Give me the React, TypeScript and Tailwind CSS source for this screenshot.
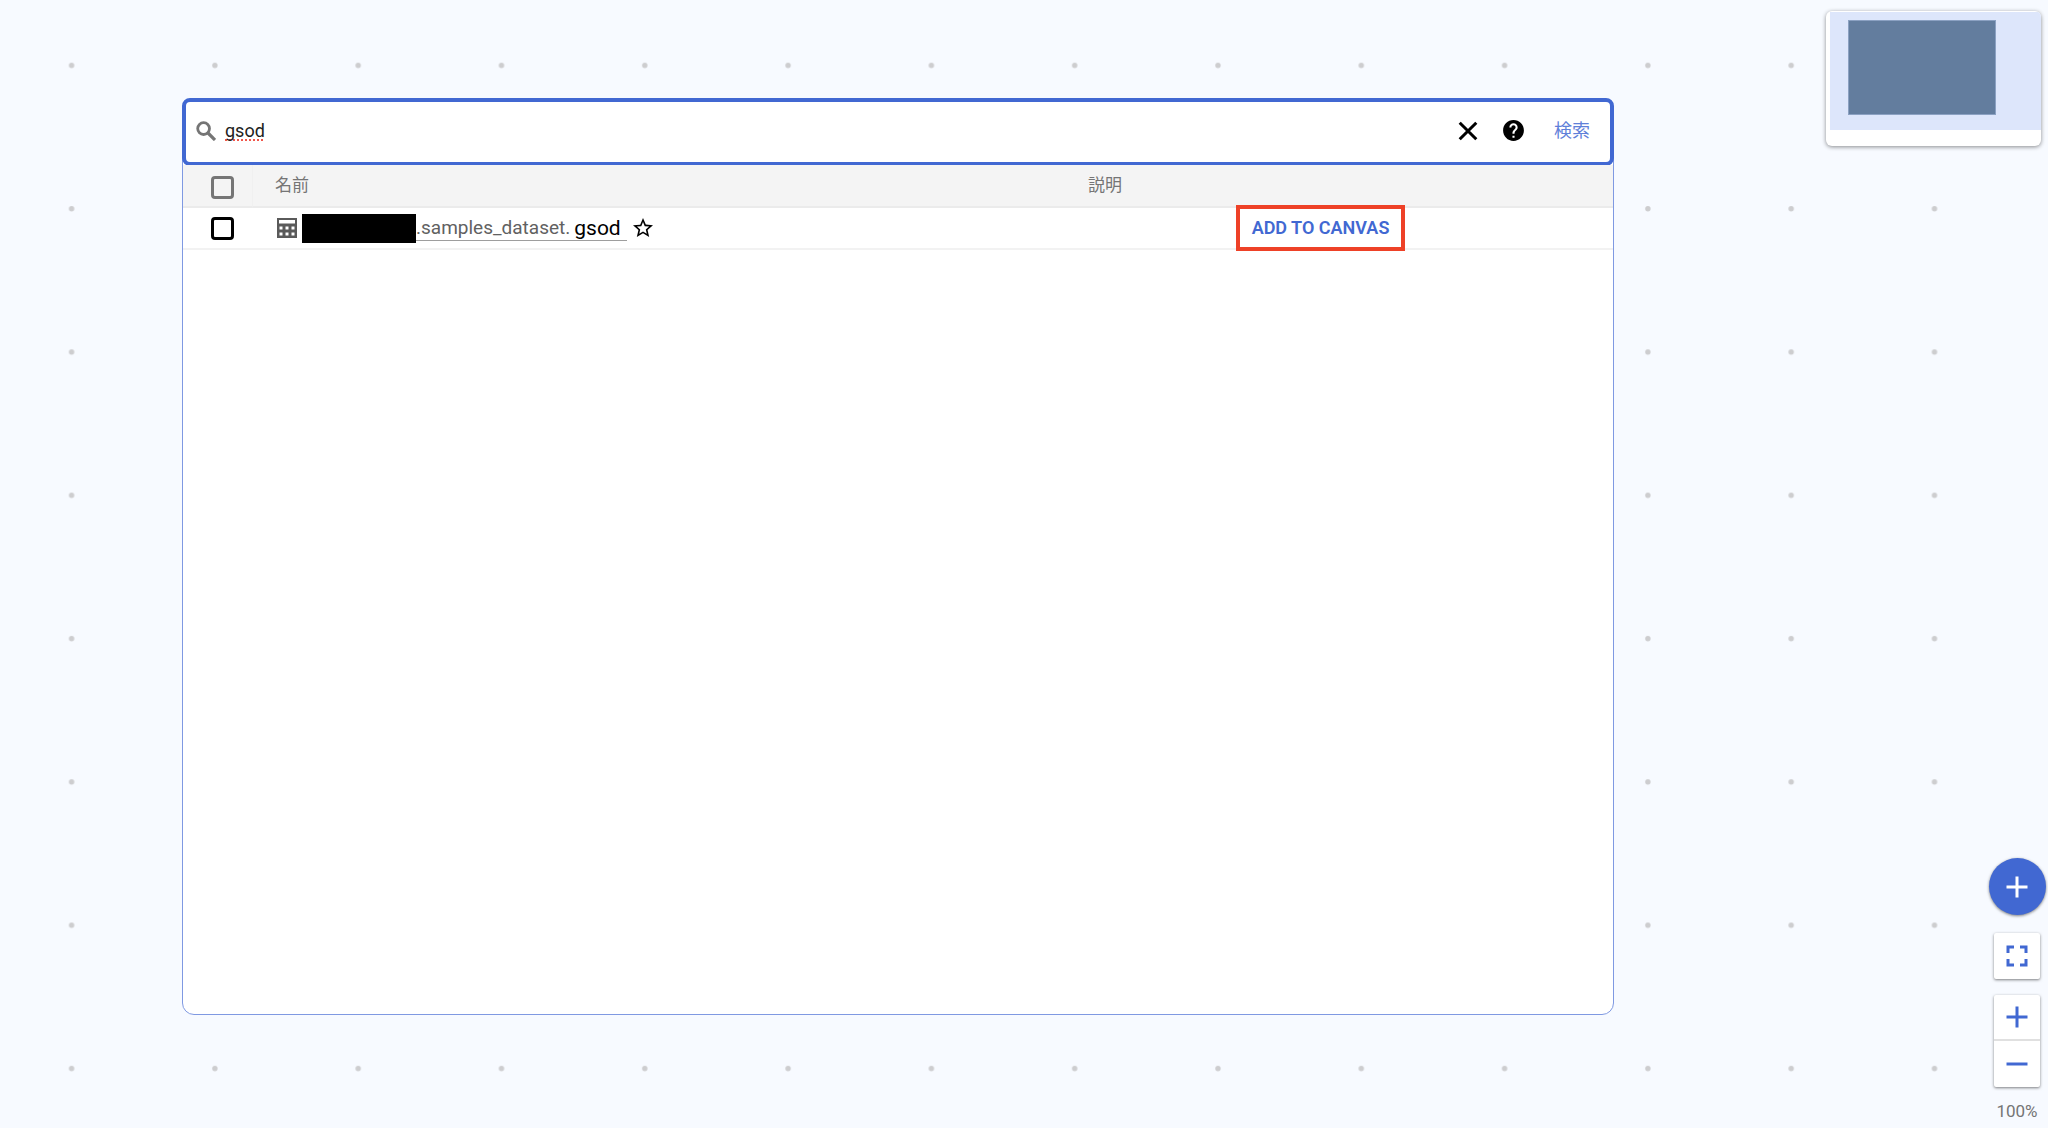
import { useState } from "react";

import {
    MdAdd,
    MdFullscreen,
    MdHelp,
    MdRemove,
    MdStarBorder,
} from "react-icons/md";

const CanvasDots = () => (
    <svg className="absolute inset-0 w-full h-full" aria-hidden="true">
        <defs>
            <pattern
                id="dots"
                width="143.3"
                height="143.3"
                patternUnits="userSpaceOnUse"
            >
                <circle cx="71.6" cy="65.4" r="2.7" fill="#cdcdcf" />
            </pattern>
        </defs>
        <rect width="100%" height="100%" fill="url(#dots)" />
    </svg>
);

const SearchIcon = () => (
    <svg
        width="20"
        height="20"
        viewBox="0 0 20 20"
        fill="none"
        stroke="#757575"
        strokeWidth="2.8"
        aria-hidden="true"
    >
        <circle cx="7.6" cy="7.6" r="5.9" />
        <path d="M12 12l7 7" strokeWidth="3.2" />
    </svg>
);

const CloseIcon = () => (
    <svg
        width="20"
        height="20"
        viewBox="0 0 20 20"
        stroke="#000"
        strokeWidth="3"
        aria-hidden="true"
    >
        <path d="M1.7 1.7l16.6 16.6M18.3 1.7L1.7 18.3" />
    </svg>
);

const TableIcon = () => (
    <svg width="20" height="20" viewBox="0 0 20 20" aria-hidden="true">
        <path
            fill="#5a5a5a"
            fillRule="evenodd"
            d="M0 0h20v20H0zM2 2v3.5h16V2zM2.5 8.5v3h3v-3zM8.5 8.5v3h3v-3zM14.5 8.5v3h3v-3zM2.5 14.5v3h3v-3zM8.5 14.5v3h3v-3zM14.5 14.5v3h3v-3z"
        />
    </svg>
);

const Checkbox = ({ label, tone }: { label: string; tone: string }) => (
    <input
        type="checkbox"
        aria-label={label}
        className={`block appearance-none w-[23px] h-[23px] ml-[28px] border-3 rounded-sm bg-transparent checked:bg-[#4168d2] ${tone}`}
    />
);

const SearchBar = () => {
    const [query, setQuery] = useState("gsod");

    return (
        <form
            onSubmit={(e) => e.preventDefault()}
            className="-m-px h-[68px] shrink-0 flex items-center pl-[10px] pr-5 pb-[3px] bg-white rounded-lg border-4 border-[#4168d2]"
        >
            <SearchIcon />
            <input
                type="text"
                aria-label="検索キーワード"
                spellCheck={false}
                value={query}
                onChange={(e) => setQuery(e.target.value)}
                className="flex-1 min-w-0 ml-[9px] text-lg text-[#212121] outline-none underline decoration-dotted decoration-2 decoration-[#f0564a] underline-offset-3 [text-decoration-skip-ink:none]"
            />
            <button type="button" aria-label="クリア" className="mr-[23px]">
                <CloseIcon />
            </button>
            <button type="button" aria-label="ヘルプ" className="mr-7">
                <MdHelp className="w-[25px] h-[25px] text-black" />
            </button>
            <button type="submit" className="text-lg text-[#5f80d9]">
                検索
            </button>
        </form>
    );
};

const ResultsTable = () => (
    <table className="w-full table-fixed border-separate border-spacing-0">
        <colgroup>
            <col className="w-[70px]" />
            <col />
            <col className="w-[151px]" />
            <col className="w-[398px]" />
        </colgroup>
        <thead>
            <tr className="h-[43px] bg-[#f4f4f4] text-[17px] text-[#757575] text-left *:border-b-2 *:border-b-[#ebebeb]">
                <th className="p-0 pt-1 border-r border-r-[#f0f0f0]">
                    <Checkbox label="すべて選択" tone="border-[#757575]" />
                </th>
                <th className="p-0 pt-px pl-[22px] font-normal">名前</th>
                <th className="p-0 pt-px pl-6 font-normal">説明</th>
                <th className="p-0" aria-label="操作" />
            </tr>
        </thead>
        <tbody>
            <tr className="h-[42px] *:border-b-2 *:border-[#f2f2f2]">
                <td className="p-0">
                    <Checkbox label="gsod を選択" tone="border-black" />
                </td>
                <td className="p-0 pl-6">
                    <div className="flex items-center">
                        <TableIcon />
                        <span className="w-[114px] h-[29px] ml-[5px] bg-black" />
                        <a href="#gsod" className="flex items-end leading-6">
                            <span className="text-[19px] leading-6 text-[#616161] border-b border-[#9e9e9e]">
                                .samples_dataset.
                            </span>
                            <span className="pl-1 pr-[6px] text-[21px] leading-6 text-black border-b border-[#9e9e9e]">
                                gsod
                            </span>
                        </a>
                        <button
                            type="button"
                            aria-label="スターを付ける"
                            className="ml-1"
                        >
                            <MdStarBorder className="w-6 h-6 text-black" />
                        </button>
                    </div>
                </td>
                <td className="p-0" />
                <td className="p-0 pl-[21px]">
                    <button
                        type="button"
                        className="relative block -my-1 w-[169px] h-[46px] border-4 border-[#ee4127] text-lg font-semibold text-[#4168d2] whitespace-nowrap"
                    >
                        ADD TO CANVAS
                    </button>
                </td>
            </tr>
        </tbody>
    </table>
);

const Minimap = () => (
    <div className="w-[215px] h-[135px] mr-[7px] pl-1 pt-px bg-white rounded-md overflow-hidden shadow-[0_1px_4px_rgba(0,0,0,0.45)]">
        <div className="h-[118px] pl-[18px] pt-2 bg-[#dde6fb]">
            <div className="w-[148px] h-[95px] bg-[#637d9e] border border-[#8ba1c2]" />
        </div>
    </div>
);

const CanvasControls = () => (
    <div className="flex flex-col items-center w-[58px] mr-[2px] text-[#4168d2]">
        <button
            type="button"
            aria-label="追加"
            className="grid place-items-center w-[57px] h-[57px] rounded-full bg-[#4168d2] text-white shadow-[0_1px_3px_rgba(0,0,0,0.5)]"
        >
            <MdAdd className="w-9 h-9" />
        </button>
        <button
            type="button"
            aria-label="全画面表示"
            className="grid place-items-center w-[46px] h-[46px] mt-[18px] rounded-xs bg-white shadow-[0_1px_3px_rgba(0,0,0,0.5)]"
        >
            <MdFullscreen className="w-9 h-9" />
        </button>
        <div className="mt-4 w-[46px] rounded-xs bg-white divide-y-2 divide-[#e0e0e0] shadow-[0_1px_3px_rgba(0,0,0,0.5)]">
            <button
                type="button"
                aria-label="拡大"
                className="grid place-items-center w-full h-[46px]"
            >
                <MdAdd className="w-9 h-9" />
            </button>
            <button
                type="button"
                aria-label="縮小"
                className="grid place-items-center w-full h-[46px]"
            >
                <MdRemove className="w-9 h-9" />
            </button>
        </div>
        <p className="mt-3 mb-[5px] text-[17px] leading-6 text-[#757575]">100%</p>
    </div>
);

export default function App() {
    return (
        <div className="relative h-screen overflow-hidden bg-[#f7faff] font-[Roboto,'Noto_Sans_CJK_JP',sans-serif]">
            <CanvasDots />
            <div className="relative flex h-full">
                <main className="flex-1 min-w-0 flex flex-col pl-[182px] pt-[98px] pb-[113px]">
                    <section className="flex-1 flex flex-col bg-white border border-[#7f99e2] rounded-xl">
                        <SearchBar />
                        <ResultsTable />
                    </section>
                </main>
                <aside className="w-[434px] shrink-0 flex flex-col items-end justify-between pt-[11px]">
                    <Minimap />
                    <CanvasControls />
                </aside>
            </div>
        </div>
    );
}
